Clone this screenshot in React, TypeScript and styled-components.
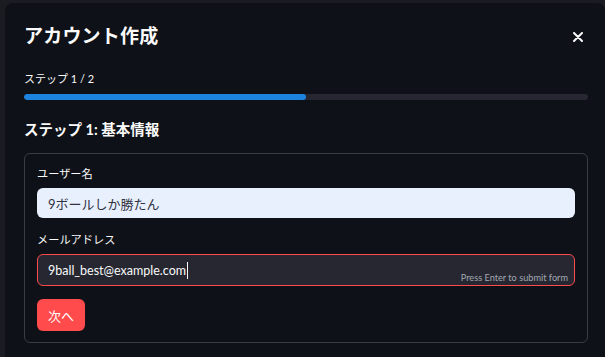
import styled, { createGlobalStyle } from "styled-components";

const GlobalStyle = createGlobalStyle`
  html, body {
    margin: 0;
    padding: 0;
    background: #1b1c22;
    height: 100%;
    overflow: hidden;
  }
  * {
    box-sizing: border-box;
  }
`;

const font = `Lato, "Noto Sans CJK JP", sans-serif`;

const Backdrop = styled.div`
  width: 605px;
  height: 357px;
  padding: 3px 0 0 5px;
  font-family: ${font};
  color: #fafafa;
`;

const Dialog = styled.div`
  width: 600px;
  height: 370px;
  background: #0e1117;
  border-radius: 8px;
  padding: 17px 17px 0 19px;
`;

const Header = styled.div`
  display: flex;
  align-items: center;
  justify-content: space-between;
  height: 28px;
  margin-bottom: 23px;
`;

const Title = styled.h2`
  margin: 0;
  font-size: 19px;
  font-weight: 700;
  letter-spacing: 0.2px;
`;

const Close = styled.button`
  border: 0;
  background: none;
  padding: 0;
  color: #fafafa;
  width: 14px;
  height: 14px;
  margin-right: 3px;
  margin-top: 5px;
  display: flex;
  align-items: center;
  justify-content: center;
`;

const StepText = styled.div`
  font-size: 11px;
  line-height: 16px;
  margin-bottom: 7px;
`;

const Track = styled.div`
  height: 6px;
  border-radius: 3px;
  background: #262730;
  overflow: hidden;
  margin-bottom: 20px;
`;

const Fill = styled.div`
  height: 100%;
  background: #1c83e1;
  border-radius: 3px;
`;

const Subtitle = styled.h3`
  margin: 0 0 13px;
  font-size: 14.5px;
  font-weight: 700;
  line-height: 20px;
`;

const Card = styled.div`
  border: 1px solid #3b3d45;
  border-radius: 6px;
  padding: 12px 12px 11px 12px;
  display: flex;
  flex-direction: column;
  align-items: flex-start;
  width: 564px;
`;

const Label = styled.label`
  font-size: 11.2px;
  line-height: 16px;
  margin: 0 0 6px;
`;

const Field = styled.div<{ $filled?: boolean; $focused?: boolean }>`
  width: 100%;
  height: ${(p) => (p.$focused ? 32 : 30)}px;
  border-radius: 6px;
  background: ${(p) => (p.$filled ? "#e8f0fe" : "#262730")};
  color: ${(p) => (p.$filled ? "#31333f" : "#fafafa")};
  border: ${(p) => (p.$focused ? "1px solid #ff4b4b" : "none")};
  padding: 0 ${(p) => (p.$focused ? 6 : 7)}px 0 ${(p) => (p.$focused ? 10 : 11)}px;
  display: flex;
  align-items: center;
  font-size: 13px;
  margin-bottom: 14px;
`;

const EmailText = styled.span`
  font-size: 12.5px;
`;

const Caret = styled.span`
  display: inline-block;
  width: 1px;
  height: 17px;
  background: #fafafa;
  margin-left: 1px;
`;

const Hint = styled.span`
  margin-left: auto;
  align-self: flex-end;
  margin-bottom: 2px;
  font-size: 9.2px;
  color: #a3a8b4;
`;

const Button = styled.button`
  margin-top: -1px;
  height: 32px;
  padding: 0 11px;
  border: 0;
  border-radius: 6px;
  background: #ff4b4b;
  color: #ffffff;
  font-family: ${font};
  font-size: 13px;
`;

export default function App() {
  const progress = 50;
  return (
    <>
      <GlobalStyle />
      <Backdrop>
        <Dialog>
          <Header>
            <Title>アカウント作成</Title>
            <Close aria-label="close">
              <svg width="10" height="10" viewBox="0 0 10 10">
                <path d="M1 1L9 9M9 1L1 9" stroke="#fafafa" strokeWidth="2" strokeLinecap="round" />
              </svg>
            </Close>
          </Header>
          <StepText>ステップ 1 / 2</StepText>
          <Track>
            <Fill style={{ width: `${progress}%` }} />
          </Track>
          <Subtitle>ステップ 1: 基本情報</Subtitle>
          <Card>
            <Label>ユーザー名</Label>
            <Field $filled>9ボールしか勝たん</Field>
            <Label>メールアドレス</Label>
            <Field $focused>
              <EmailText>9ball_best@example.com</EmailText>
              <Caret />
              <Hint>Press Enter to submit form</Hint>
            </Field>
            <Button>次へ</Button>
          </Card>
        </Dialog>
      </Backdrop>
    </>
  );
}
